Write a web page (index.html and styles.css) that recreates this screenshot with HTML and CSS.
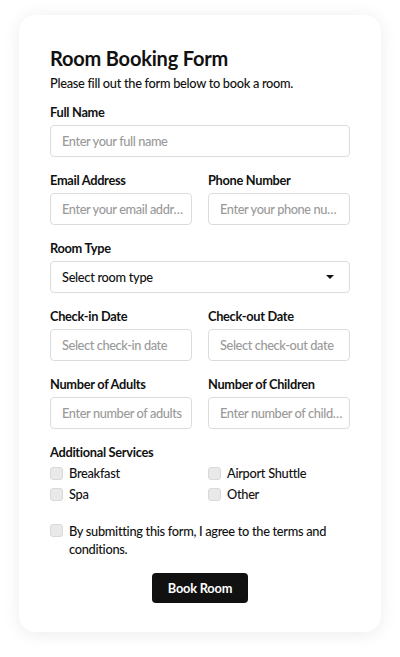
FILE: index.html
```html
<!DOCTYPE html>
<html lang="en">
<head>
<meta charset="utf-8">
<title>Room Booking Form</title>
<link rel="stylesheet" href="styles.css">
</head>
<body>
<form class="card">
  <h1 class="title">Room Booking Form</h1>
  <p class="subtitle">Please fill out the form below to book a room.</p>

  <div class="field">
    <label class="label">Full Name</label>
    <input class="input" type="text" placeholder="Enter your full name">
  </div>

  <div class="row">
    <div class="field">
      <label class="label">Email Address</label>
      <input class="input" type="text" placeholder="Enter your email address">
    </div>
    <div class="field">
      <label class="label">Phone Number</label>
      <input class="input" type="text" placeholder="Enter your phone number">
    </div>
  </div>

  <div class="field">
    <label class="label">Room Type</label>
    <div class="select">
      <span>Select room type</span>
      <svg class="caret" width="10" height="6" viewBox="0 0 10 6"><path d="M1 1h8L5 5z" fill="#111"/></svg>
    </div>
  </div>

  <div class="row">
    <div class="field">
      <label class="label">Check-in Date</label>
      <input class="input" type="text" placeholder="Select check-in date">
    </div>
    <div class="field">
      <label class="label">Check-out Date</label>
      <input class="input" type="text" placeholder="Select check-out date">
    </div>
  </div>

  <div class="row">
    <div class="field">
      <label class="label">Number of Adults</label>
      <input class="input" type="text" placeholder="Enter number of adults">
    </div>
    <div class="field">
      <label class="label">Number of Children</label>
      <input class="input" type="text" placeholder="Enter number of children">
    </div>
  </div>

  <div class="services">
    <div class="label">Additional Services</div>
    <div class="checks">
      <label class="check"><span class="box"></span>Breakfast</label>
      <label class="check"><span class="box"></span>Airport Shuttle</label>
      <label class="check"><span class="box"></span>Spa</label>
      <label class="check"><span class="box"></span>Other</label>
    </div>
  </div>

  <label class="terms"><span class="box"></span><span>By submitting this form, I agree to the terms and conditions.</span></label>

  <div class="actions">
    <button class="button" type="button">Book Room</button>
  </div>
</form>
</body>
</html>
```
FILE: styles.css
```css
* { box-sizing: border-box; }
html, body { margin: 0; padding: 0; }
body {
  background: #ffffff;
  font-family: Lato, "Noto Sans", sans-serif;
  font-weight: 500;
  color: #111;
  padding: 15px 19px;
  letter-spacing: -0.3px;
}
.card {
  background: #fff;
  border-radius: 16px;
  box-shadow: 0 2px 18px rgba(0,0,0,0.08);
  padding: 31px 31px 29px;
  display: flex;
  flex-direction: column;
}
.title {
  margin: 0;
  font-size: 20px;
  line-height: 24px;
  font-weight: 700;
  letter-spacing: -0.2px;
}
.subtitle {
  margin: 4px 0 11px;
  font-size: 12.8px;
  line-height: 18px;
}
.field {
  display: flex;
  flex-direction: column;
  margin-bottom: 14px;
  min-width: 0;
}
.label {
  font-size: 12.8px;
  font-weight: 700;
  line-height: 18px;
  margin-bottom: 4px;
}
.input, .select {
  height: 32px;
  border: 1px solid #dcdcdc;
  border-radius: 4px;
  padding: 0 4px 0 11px;
  font-family: inherit;
  font-weight: 500;
  font-size: 12.8px;
  letter-spacing: -0.4px;
  color: #111;
  background: #fff;
  width: 100%;
  text-overflow: ellipsis;
  outline: none;
}
.input::placeholder { color: #9a9a9a; }
.select {
  display: flex;
  align-items: center;
  justify-content: space-between;
  padding-right: 14px;
  letter-spacing: -0.3px;
}
.row {
  display: grid;
  grid-template-columns: 1fr 1fr;
  column-gap: 16px;
}
.services { margin-bottom: 19px; }
.services .label { margin-bottom: 3px; }
.checks {
  display: grid;
  grid-template-columns: 1fr 1fr;
  column-gap: 16px;
  row-gap: 3px;
}
.check, .terms {
  display: flex;
  align-items: center;
  gap: 6px;
  font-size: 12.8px;
  line-height: 18px;
}
.box {
  width: 13px;
  height: 13px;
  flex: none;
  background: #e9e9e9;
  border: 1px solid #d9d9d9;
  border-radius: 3px;
}
.terms { align-items: flex-start; }
.terms .box { margin-top: 2px; }
.actions {
  display: flex;
  justify-content: center;
  margin-top: 15px;
}
.button {
  background: #111;
  color: #fff;
  border: none;
  border-radius: 4px;
  height: 30px;
  width: 96px;
  padding: 0;
  font-family: inherit;
  font-size: 12.8px;
  letter-spacing: -0.2px;
  font-weight: 700;
}
```
